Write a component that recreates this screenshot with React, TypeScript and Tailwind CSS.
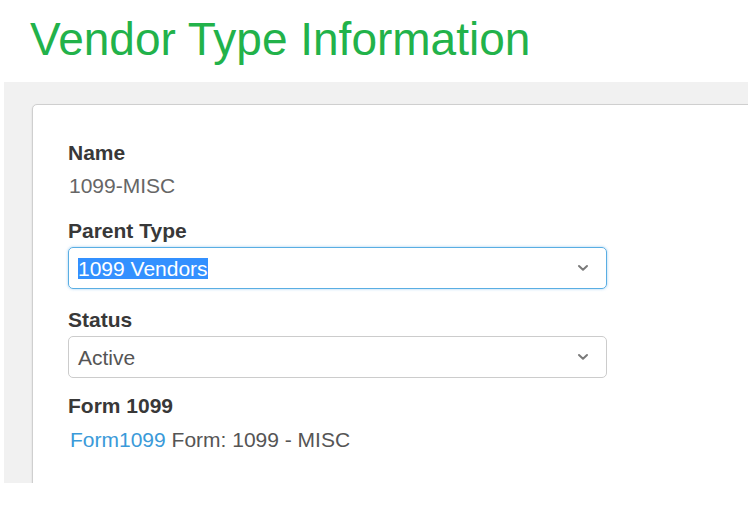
import React from 'react';

function Chevron() {
  return (
    <svg width="12" height="8" viewBox="0 0 12 8" className="shrink-0">
      <path d="M2 2 L6 5.8 L10 2" fill="none" stroke="#7a7a7a" strokeWidth="2" strokeLinecap="round" strokeLinejoin="round" />
    </svg>
  );
}

export default function App() {
  return (
    <div className="w-[756px] h-[506px] bg-white overflow-hidden font-['Liberation_Sans',Arial,sans-serif]">
      <h1 className="ml-[30px] mt-[17px] text-[46px] leading-[45px] font-normal text-[#22b24a]">
        Vendor Type Information
      </h1>

      <div className="ml-[4px] mt-[20px] w-[744px] h-[401px] bg-[#f1f1f1] overflow-hidden pl-[28px] pt-[22px]">
        <div className="w-[760px] h-[420px] bg-white border border-[#cfcfcf] rounded-[5px] shadow-[0_1px_2px_rgba(0,0,0,0.12)] pl-[35px] pt-[37px] text-[21px] leading-[21px]">
          <div className="font-bold text-[#383838]">Name</div>
          <div className="mt-[12px] ml-[1px] text-[#666]">1099-MISC</div>

          <div className="mt-[24px] font-bold text-[#383838]">Parent Type</div>
          <div className="mt-[6px] w-[539px] h-[42px] border border-[#5aaee3] rounded-[5px] shadow-[0_0_3px_rgba(102,175,233,0.6)] flex items-center justify-between pl-[9px] pr-[17px]">
            <span className="bg-[#3390ff] text-white">1099 Vendors</span>
            <Chevron />
          </div>

          <div className="mt-[20px] font-bold text-[#383838]">Status</div>
          <div className="mt-[6px] w-[539px] h-[42px] border border-[#cccccc] rounded-[5px] flex items-center justify-between pl-[9px] pr-[17px] text-[#555]">
            <span>Active</span>
            <Chevron />
          </div>

          <div className="mt-[17px] font-bold text-[#383838]">Form 1099</div>
          <div className="mt-[13px] ml-[2px] text-[#555]">
            <a className="text-[#3a9ad9]">Form1099</a> Form: 1099 - MISC
          </div>
        </div>
      </div>
    </div>
  );
}
